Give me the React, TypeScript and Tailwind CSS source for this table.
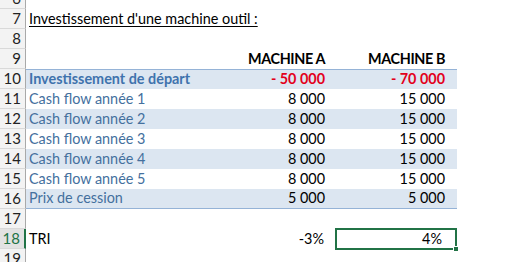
const rows = [
  { n: 11, label: "Cash flow année 1", a: "8 000", b: "15 000", fill: false },
  { n: 12, label: "Cash flow année 2", a: "8 000", b: "15 000", fill: true },
  { n: 13, label: "Cash flow année 3", a: "8 000", b: "15 000", fill: false },
  { n: 14, label: "Cash flow année 4", a: "8 000", b: "15 000", fill: true },
  { n: 15, label: "Cash flow année 5", a: "8 000", b: "15 000", fill: false },
  { n: 16, label: "Prix de cession", a: "5 000", b: "5 000", fill: true },
];

const RowHead = ({ n, active }: { n: number; active?: boolean }) => (
  <div
    className={`w-[26px] shrink-0 flex items-center justify-end pr-[4px] text-[15px] border-b border-[#d9d9d9] ${
      active
        ? "bg-[#e2e2e2] text-[#217346] border-r-2 border-r-[#217346]"
        : "bg-[#f3f3f3] text-[#222] border-r border-r-[#a9a9a9]"
    }`}
  >
    {n}
  </div>
);

export default function App() {
  return (
    <div
      className="w-[514px] h-[262px] overflow-hidden bg-white text-[14.4px] leading-none"
      style={{ fontFamily: "Lato, 'Liberation Sans', sans-serif" }}
    >
      <div className="-mt-[11px] flex flex-col">
        {/* Row 6 */}
        <div className="flex h-[20px]">
          <RowHead n={6} />
        </div>

        {/* Row 7 - title */}
        <div className="flex h-[20px]">
          <RowHead n={7} />
          <div className="flex items-center pl-[3px] text-black underline underline-offset-[2px]">
            Investissement d'une machine outil :
          </div>
        </div>

        {/* Row 8 */}
        <div className="flex h-[20px]">
          <RowHead n={8} />
        </div>

        {/* Row 9 - headers */}
        <div className="flex h-[20px]">
          <RowHead n={9} />
          <div className="w-[191px]" />
          <div className="w-[120px] flex items-center justify-end pr-3 font-bold tracking-[-0.4px] text-black">
            MACHINE A
          </div>
          <div className="w-[120px] flex items-center justify-end pr-3 font-bold tracking-[-0.4px] text-black">
            MACHINE B
          </div>
        </div>

        {/* Row 10 - investissement */}
        <div className="flex h-[20px]">
          <RowHead n={10} />
          <div className="flex w-[431px] bg-[#dce6f1] border-t border-[#95b3d7]">
            <div className="w-[191px] flex items-center pl-[3px] font-bold text-[#3f73ad]">
              Investissement de départ
            </div>
            <div className="w-[120px] flex items-center justify-end pr-3 font-bold text-[#e3001b]">
              - 50 000
            </div>
            <div className="w-[120px] flex items-center justify-end pr-3 font-bold text-[#e3001b]">
              - 70 000
            </div>
          </div>
        </div>

        {rows.map((r) => (
          <div key={r.n} className="flex h-[20px]">
            <RowHead n={r.n} />
            <div
              className={`flex w-[431px] ${r.fill ? "bg-[#dce6f1]" : "bg-white"} ${
                r.n === 16 ? "border-b border-[#95b3d7]" : ""
              }`}
            >
              <div className="w-[191px] flex items-center pl-[3px] text-[#44709e]">
                {r.label}
              </div>
              <div className="w-[120px] flex items-center justify-end pr-3 text-black">
                {r.a}
              </div>
              <div className="w-[120px] flex items-center justify-end pr-3 text-black">
                {r.b}
              </div>
            </div>
          </div>
        ))}

        {/* Row 17 */}
        <div className="flex h-[20px]">
          <RowHead n={17} />
        </div>

        {/* Row 18 - TRI */}
        <div className="flex h-[20px]">
          <RowHead n={18} active />
          <div className="w-[190px] flex items-center pl-[3px] text-black">TRI</div>
          <div className="w-[120px] flex items-center justify-end pr-3 text-black">-3%</div>
          <div className="relative w-[122px] -my-[1px] -ml-[1px] flex items-center justify-end pr-[13px] text-black border-2 border-[#217346]">
            4%
            <div className="absolute -right-[4px] -bottom-[4px] w-[6px] h-[6px] bg-[#217346] border border-white" />
          </div>
        </div>

        {/* Row 19 */}
        <div className="flex h-[20px]">
          <RowHead n={19} />
        </div>
      </div>
    </div>
  );
}
